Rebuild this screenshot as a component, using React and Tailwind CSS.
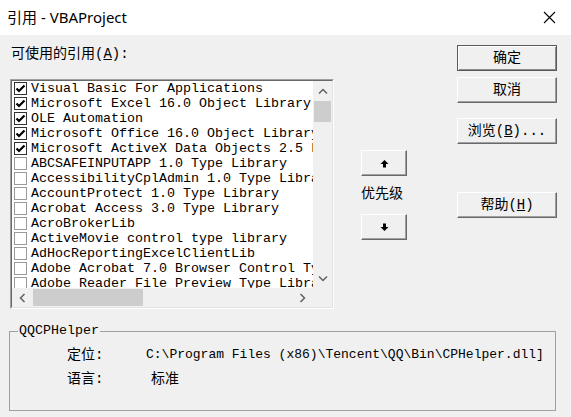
import React from "react";

const items = [
  [true, "Visual Basic For Applications"],
  [true, "Microsoft Excel 16.0 Object Library"],
  [true, "OLE Automation"],
  [true, "Microsoft Office 16.0 Object Library"],
  [true, "Microsoft ActiveX Data Objects 2.5 Library"],
  [false, "ABCSAFEINPUTAPP 1.0 Type Library"],
  [false, "AccessibilityCplAdmin 1.0 Type Library"],
  [false, "AccountProtect 1.0 Type Library"],
  [false, "Acrobat Access 3.0 Type Library"],
  [false, "AcroBrokerLib"],
  [false, "ActiveMovie control type library"],
  [false, "AdHocReportingExcelClientLib"],
  [false, "Adobe Acrobat 7.0 Browser Control Type Library 1.0"],
  [false, "Adobe Reader File Preview Type Library"],
];

const cjk = "font-['Liberation_Mono','Noto_Sans_CJK_SC',monospace]";

function Btn({ children, def, className }) {
  return (
    <div
      className={
        (def
          ? "border border-[#5a5a5a] shadow-[inset_1px_1px_0_#ffffff,inset_-1px_-1px_0_#8a8a8a] "
          : "border border-t-white border-l-white border-b-[#696969] border-r-[#696969] shadow-[inset_-1px_-1px_0_#a0a0a0] ") +
        "h-[26px] flex items-center justify-center bg-[#f0f0f0] text-[14px] leading-none text-black " +
        cjk +
        " " +
        (className || "")
      }
    >
      {children}
    </div>
  );
}

function Check({ on }) {
  return (
    <div
      className={
        (on ? "border-[#333333] " : "border-[#9a9a9a] ") +
        "w-[13px] h-[13px] border bg-white flex items-center justify-center shrink-0"
      }
    >
      {on && (
        <svg width="11" height="11" viewBox="0 0 11 11">
          <path d="M1.5 5.5 L4 8 L9.5 2.5" fill="none" stroke="#000" strokeWidth="2.2" />
        </svg>
      )}
    </div>
  );
}

function Chev({ dir }) {
  const paths = {
    up: "M1 5.5 L5 1.5 L9 5.5",
    down: "M1 1.5 L5 5.5 L9 1.5",
    left: "M5.5 1 L1.5 5 L5.5 9",
    right: "M1.5 1 L5.5 5 L1.5 9",
  };
  const vert = dir === "up" || dir === "down";
  return (
    <svg width={vert ? 10 : 7} height={vert ? 7 : 10} viewBox={vert ? "0 0 10 7" : "0 0 7 10"}>
      <path d={paths[dir]} fill="none" stroke="#606060" strokeWidth="1.5" />
    </svg>
  );
}

function Arrow({ up }) {
  return (
    <svg width="9" height="9" viewBox="0 0 9 9">
      <path
        d={up ? "M4.5 1 L8.5 5 H6 V8.5 H3 V5 H0.5 Z" : "M4.5 8 L8.5 4 H6 V0.5 H3 V4 H0.5 Z"}
        fill="#000"
      />
    </svg>
  );
}

export default function App() {
  return (
    <div className="w-[571px] h-[417px] bg-[#f0f0f0] flex flex-col overflow-hidden">
      {/* title bar */}
      <div className="h-[35px] bg-white flex items-center justify-between pl-[7px] pr-[15px] shrink-0">
        <span className="text-[15px] text-black font-['Noto_Sans','Noto_Sans_CJK_SC',sans-serif] leading-none">
          引用 - VBAProject
        </span>
        <svg width="13" height="13" viewBox="0 0 13 13">
          <path d="M1 1 L12 12 M12 1 L1 12" stroke="#000" strokeWidth="1.1" />
        </svg>
      </div>

      {/* body */}
      <div className="flex">
        {/* left column */}
        <div className="ml-[10px] flex flex-col">
          <div className={"mt-[11px] h-[16px] pl-[1px] flex items-center text-[14px] text-black " + cjk}>
            可使用的引用(<span className="underline">A</span>):
          </div>
          <div className="mt-[17px] w-[324px] h-[230px] border border-t-[#a0a0a0] border-l-[#a0a0a0] border-b-white border-r-white">
            <div className="w-full h-full border border-t-[#696969] border-l-[#696969] border-b-[#e3e3e3] border-r-[#e3e3e3] bg-white flex flex-col">
              <div className="flex flex-1 min-h-0">
                <div className="flex-1 min-w-0 overflow-hidden">
                  {items.map(([on, t], i) => (
                    <div key={i} className="h-[15px] flex items-center pl-[2px] whitespace-nowrap">
                      <Check on={on} />
                      <span className="ml-[4px] text-[13.33px] leading-none text-black font-['Liberation_Mono',monospace]">
                        {t}
                      </span>
                    </div>
                  ))}
                </div>
                <div className="w-[19px] bg-[#f0f0f0] flex flex-col shrink-0">
                  <div className="h-[20px] flex items-center justify-center">
                    <Chev dir="up" />
                  </div>
                  <div className="h-[21px] bg-[#cdcdcd] mx-[1px]" />
                  <div className="flex-1" />
                  <div className="h-[20px] flex items-center justify-center">
                    <Chev dir="down" />
                  </div>
                </div>
              </div>
              <div className="h-[19px] flex shrink-0">
                <div className="flex-1 bg-[#f0f0f0] flex items-center">
                  <div className="w-[21px] flex items-center justify-center">
                    <Chev dir="left" />
                  </div>
                  <div className="w-[110px] h-[17px] bg-[#cdcdcd]" />
                  <div className="flex-1" />
                  <div className="w-[21px] flex items-center justify-center">
                    <Chev dir="right" />
                  </div>
                </div>
                <div className="w-[19px] bg-[#f0f0f0]" />
              </div>
            </div>
          </div>
        </div>

        {/* middle column */}
        <div className="ml-[27px] w-[46px] flex flex-col">
          <Btn className="mt-[115px] h-[26px]">
            <Arrow up />
          </Btn>
          <div className={"mt-[10px] h-[16px] flex items-center text-[14px] text-black whitespace-nowrap " + cjk}>
            优先级
          </div>
          <Btn className="mt-[12px]">
            <Arrow />
          </Btn>
        </div>

        {/* right column */}
        <div className="ml-[50px] w-[100px] flex flex-col">
          <Btn def className="mt-[10px]">确定</Btn>
          <Btn className="mt-[6px]">取消</Btn>
          <Btn className="mt-[15px]">
            浏览(<span className="underline">B</span>)...
          </Btn>
          <Btn className="mt-[48px]">
            帮助(<span className="underline">H</span>)
          </Btn>
        </div>
      </div>

      {/* group box */}
      <div className="relative mt-[22px] ml-[9px] w-[547px] h-[80px] border border-[#a0a0a0]">
        <span className="absolute -top-[9px] left-[8px] px-[1px] bg-[#f0f0f0] text-[13.33px] leading-[16px] text-black font-['Liberation_Mono',monospace]">
          QQCPHelper
        </span>
        <div className={"pt-[11px] pl-[57px] text-[14px] text-black " + cjk}>
          <div className="h-[24px] flex items-center whitespace-nowrap">
            <span className="w-[79px]">定位:</span>
            <span className="text-[13px] font-['Liberation_Mono',monospace]">
              C:\Program Files (x86)\Tencent\QQ\Bin\CPHelper.dll]
            </span>
          </div>
          <div className="h-[24px] flex items-center whitespace-nowrap">
            <span className="w-[84px]">语言:</span>
            <span>标准</span>
          </div>
        </div>
      </div>
    </div>
  );
}
